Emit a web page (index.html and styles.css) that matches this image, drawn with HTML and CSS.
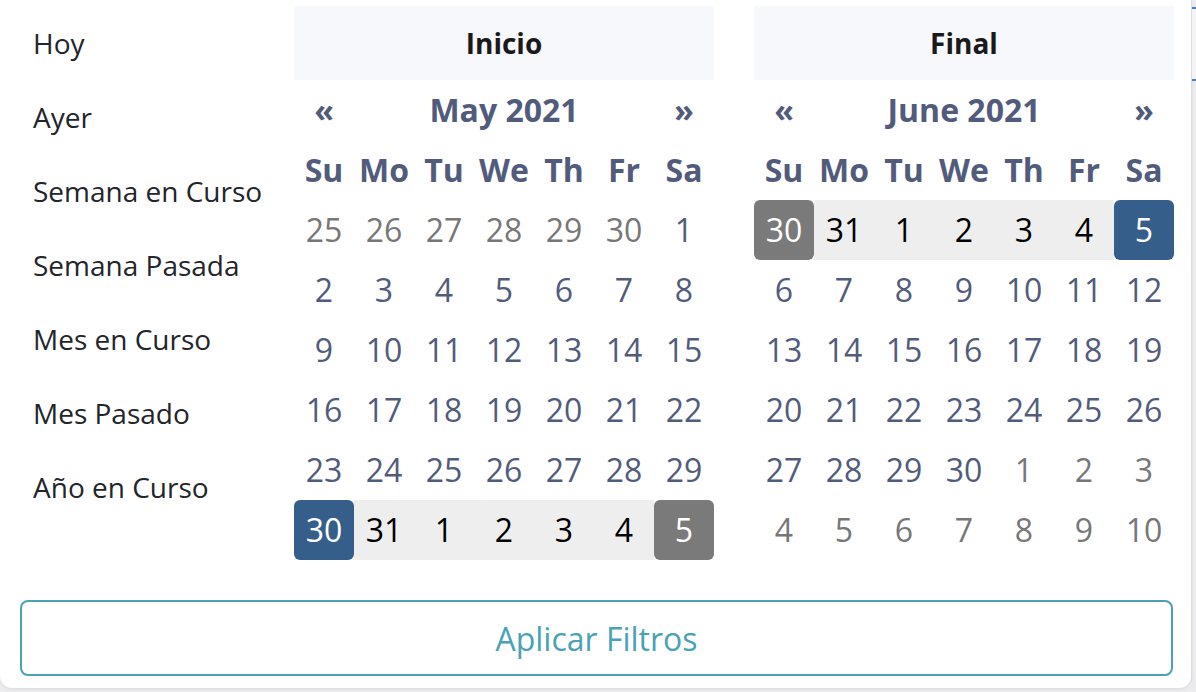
FILE: index.html
```html
<!doctype html>
<html>
    <head>
        <meta http-equiv="Content-Type" content="text/html; charset=utf-8">
        <link rel="stylesheet" href="styles.css">
    </head>
    <body>
        <div class="page">
            <div class="picker">
                <div class="body">
                    <ul class="ranges">
                        <li>Hoy</li>
                        <li>Ayer</li>
                        <li>Semana en Curso</li>
                        <li>Semana Pasada</li>
                        <li>Mes en Curso</li>
                        <li>Mes Pasado</li>
                        <li>Año en Curso</li>
                    </ul>
                    <div class="calendar">
                        <div class="title">Inicio</div>
                        <div class="grid">
                            <span class="arrow">«</span>
                            <span class="month">May 2021</span>
                            <span class="arrow">»</span>
                            <span class="dow">Su</span><span class="dow">Mo</span><span class="dow">Tu</span><span class="dow">We</span><span class="dow">Th</span><span class="dow">Fr</span><span class="dow">Sa</span>
                            <span class="off">25</span><span class="off">26</span><span class="off">27</span><span class="off">28</span><span class="off">29</span><span class="off">30</span><span>1</span>
                            <span>2</span><span>3</span><span>4</span><span>5</span><span>6</span><span>7</span><span>8</span>
                            <span>9</span><span>10</span><span>11</span><span>12</span><span>13</span><span>14</span><span>15</span>
                            <span>16</span><span>17</span><span>18</span><span>19</span><span>20</span><span>21</span><span>22</span>
                            <span>23</span><span>24</span><span>25</span><span>26</span><span>27</span><span>28</span><span>29</span>
                            <span class="active">30</span><span class="in-range">31</span><span class="in-range">1</span><span class="in-range">2</span><span class="in-range">3</span><span class="in-range">4</span><span class="ghost">5</span>
                        </div>
                    </div>
                    <div class="calendar">
                        <div class="title">Final</div>
                        <div class="grid">
                            <span class="arrow">«</span>
                            <span class="month">June 2021</span>
                            <span class="arrow">»</span>
                            <span class="dow">Su</span><span class="dow">Mo</span><span class="dow">Tu</span><span class="dow">We</span><span class="dow">Th</span><span class="dow">Fr</span><span class="dow">Sa</span>
                            <span class="ghost">30</span><span class="in-range">31</span><span class="in-range">1</span><span class="in-range">2</span><span class="in-range">3</span><span class="in-range">4</span><span class="active">5</span>
                            <span>6</span><span>7</span><span>8</span><span>9</span><span>10</span><span>11</span><span>12</span>
                            <span>13</span><span>14</span><span>15</span><span>16</span><span>17</span><span>18</span><span>19</span>
                            <span>20</span><span>21</span><span>22</span><span>23</span><span>24</span><span>25</span><span>26</span>
                            <span>27</span><span>28</span><span>29</span><span>30</span><span class="off">1</span><span class="off">2</span><span class="off">3</span>
                            <span class="off">4</span><span class="off">5</span><span class="off">6</span><span class="off">7</span><span class="off">8</span><span class="off">9</span><span class="off">10</span>
                        </div>
                    </div>
                </div>
                <button class="apply">Aplicar Filtros</button>
            </div>
            <div class="behind"></div>
        </div>
    </body>
</html>
```

FILE: styles.css
```css
body{
    margin: 0;
    background: #ececee;
    font-family: "Open Sans", "Liberation Sans", sans-serif;
}
.page{
    display: flex;
    align-items: flex-start;
    height: 692px;
    overflow: hidden;
}
.picker{
    width: 1192px;
    flex: none;
    box-sizing: border-box;
    padding: 6px 18px 12px 20px;
    background: #fff;
    border-radius: 0 0 12px 12px;
    border-right: 1px solid #dcdcdf;
    box-shadow: 0 1px 3px rgba(0, 0, 0, 0.08);
}
.body{
    display: flex;
    gap: 40px;
}
.ranges{
    flex: none;
    width: 221px;
    margin: 0;
    padding: 0 0 0 13px;
    list-style: none;
}
.ranges li{
    height: 74px;
    line-height: 74px;
    font-size: 28px;
    color: #22252a;
    white-space: nowrap;
}
.calendar{
    flex: none;
    width: 420px;
}
.title{
    height: 74px;
    line-height: 74px;
    background: #f7f8fc;
    text-align: center;
    font-size: 28px;
    font-weight: bold;
    color: #1a1a1d;
}
.grid{
    display: grid;
    grid-template-columns: repeat(7, 60px);
    grid-auto-rows: 60px;
}
.grid span{
    line-height: 60px;
    text-align: center;
    font-size: 32px;
    color: #515c7c;
}
.grid .arrow{
    font-weight: bold;
}
.grid .month{
    grid-column: span 5;
    font-weight: bold;
}
.grid .dow{
    font-weight: bold;
}
.grid .off{
    color: #777;
}
.grid .in-range{
    background: #eee;
    color: #000;
}
.grid .active{
    background: #355f8a;
    color: #fff;
    border-radius: 6px;
}
.grid .ghost{
    background: #7a7a7a;
    color: #fff;
    border-radius: 6px;
}
.apply{
    display: block;
    width: 100%;
    height: 76px;
    margin-top: 40px;
    background: #fff;
    border: 2px solid #4aa2b6;
    border-radius: 8px;
    font-family: inherit;
    font-size: 32px;
    color: #4aa2b6;
}
.behind{
    flex: none;
    width: 20px;
    height: 74px;
    margin-top: 7px;
    box-sizing: border-box;
    border-top: 2px solid #3d7fe0;
    border-bottom: 2px solid #3d7fe0;
    background: #f4f4f6;
}
```
